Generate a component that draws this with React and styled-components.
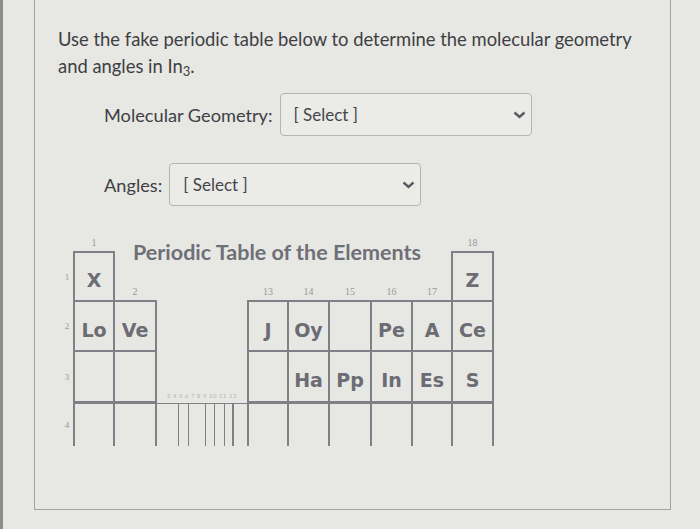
import React from "react";
import styled, { createGlobalStyle } from "styled-components";

const GlobalStyle = createGlobalStyle`
  body {
    margin: 0;
    background: #e7e7e3;
    font-family: Lato, "Open Sans", sans-serif;
  }
`;

const LINE = "#7f7f88";

const Page = styled.div`
  height: 529px;
  display: flex;
  border-left: 3px solid #8c8c8a;
  padding-left: 31px;
  box-sizing: border-box;
  overflow: hidden;
`;

const Card = styled.div`
  width: 637px;
  height: 510px;
  box-sizing: border-box;
  border: 1px solid #a3a3a3;
  border-top: none;
  padding: 26px 0 0 23px;
`;

const Question = styled.p`
  margin: 0;
  font-size: 18.4px;
  line-height: 27px;
  color: #3e3f44;
  sub {
    font-size: 13px;
    vertical-align: -3px;
    line-height: 0;
  }
`;

const Answers = styled.div`
  margin: 13px 0 0 46px;
  display: flex;
  flex-direction: column;
  gap: 27px;
`;

const AnswerRow = styled.div`
  display: flex;
  align-items: center;
  gap: 7px;
`;

const Label = styled.span`
  font-size: 18.2px;
  color: #3e3f44;
`;

const SelectBox = styled.div`
  width: 252px;
  height: 43px;
  box-sizing: border-box;
  border: 1px solid #b4b4b4;
  border-radius: 4px;
  background: #ebebe8;
  display: flex;
  align-items: center;
  justify-content: space-between;
  padding: 0 5px 0 13px;
  font-size: 17px;
  color: #45464b;
`;

const Chevron = () => (
  <svg width="13" height="8" viewBox="0 0 13 8">
    <path d="M1.5 1.5 L6.5 6 L11.5 1.5" fill="none" stroke="#5a5b60" strokeWidth="2.4" />
  </svg>
);

const Table = styled.div`
  margin: 30px 0 0 2px;
  display: grid;
  grid-template-columns: 14px 40px 42px 92px 40px 41px 42px 41px 40px 41px;
  grid-template-rows: 16px 49px 50px 52px 43px;
`;

const Cell = styled.div`
  grid-column: ${(p) => p.col};
  grid-row: ${(p) => p.row};
  box-sizing: border-box;
  border: 1px solid ${LINE};
  border-bottom-width: ${(p) => (p.thick ? "2px" : "1px")};
  box-shadow: 0 0 0 1px ${LINE};
  display: flex;
  align-items: center;
  justify-content: center;
  padding-top: 7px;
  font-family: "DejaVu Sans", Verdana, sans-serif;
  font-weight: bold;
  font-size: 19px;
  color: #6c6c74;
`;

const OpenCell = styled.div`
  grid-column: ${(p) => p.col};
  grid-row: 5;
  border: 1px solid ${LINE};
  border-bottom: none;
  box-shadow: -1px 0 0 0 ${LINE}, 1px 0 0 0 ${LINE}, 0 -1px 0 0 ${LINE};
`;

const Transition = styled.div`
  grid-column: 4;
  grid-row: 5;
  display: flex;
  border-top: 1px solid ${LINE};
`;

const Slot = styled.div`
  width: ${(p) => p.w}px;
  border-right: ${(p) => (p.last ? "none" : `1px solid ${LINE}`)};
  border-right-width: ${(p) => (p.bold ? "2px" : "1px")};
`;

const GroupNo = styled.span`
  grid-column: ${(p) => p.col};
  grid-row: ${(p) => p.row};
  align-self: end;
  justify-self: center;
  font-family: "Liberation Serif", serif;
  font-size: 10px;
  line-height: 10px;
  margin-bottom: 4px;
  color: #98989b;
`;

const PeriodNo = styled.span`
  grid-column: 1;
  grid-row: ${(p) => p.row};
  align-self: center;
  justify-self: center;
  font-family: "Liberation Serif", serif;
  font-size: 9px;
  color: #98989b;
`;

const Title = styled.div`
  grid-column: 3 / 10;
  grid-row: 1 / 3;
  align-self: start;
  justify-self: center;
  margin: 4px 12px 0 0;
  font-weight: bold;
  font-size: 21.5px;
  line-height: 24px;
  color: #6f6f77;
`;

const TinyNums = styled.span`
  grid-column: 4;
  grid-row: 4;
  align-self: end;
  justify-self: center;
  margin-bottom: 4px;
  white-space: nowrap;
  font-size: 6px;
  letter-spacing: 0.5px;
  color: #b4b4b6;
`;

const row2 = [
  [2, "Lo"], [3, "Ve"], [5, "J"], [6, "Oy"], [7, ""], [8, "Pe"], [9, "A"], [10, "Ce"],
];
const row3 = [
  [2, ""], [3, ""], [5, ""], [6, "Ha"], [7, "Pp"], [8, "In"], [9, "Es"], [10, "S"],
];
const slots = [24, 10, 17, 9, 9, 8, 15];

export default function App() {
  return (
    <>
      <GlobalStyle />
      <Page>
        <Card>
          <Question>
            Use the fake periodic table below to determine the molecular geometry
            <br />
            and angles in In<sub>3</sub>.
          </Question>
          <Answers>
            <AnswerRow>
              <Label>Molecular Geometry:</Label>
              <SelectBox>
                [ Select ]
                <Chevron />
              </SelectBox>
            </AnswerRow>
            <AnswerRow>
              <Label>Angles:</Label>
              <SelectBox>
                [ Select ]
                <Chevron />
              </SelectBox>
            </AnswerRow>
          </Answers>

          <Table>
            <GroupNo col={2} row={1}>1</GroupNo>
            <GroupNo col={10} row={1}>18</GroupNo>
            <Title>Periodic Table of the Elements</Title>
            <GroupNo col={3} row={2}>2</GroupNo>
            {[13, 14, 15, 16, 17].map((g, i) => (
              <GroupNo key={g} col={5 + i} row={2}>{g}</GroupNo>
            ))}
            {[1, 2, 3, 4].map((n) => (
              <PeriodNo key={n} row={n + 1}>{n}</PeriodNo>
            ))}

            <Cell col={2} row={2}>X</Cell>
            <Cell col={10} row={2}>Z</Cell>
            {row2.map(([c, s]) => (
              <Cell key={"a" + c} col={c} row={3}>{s}</Cell>
            ))}
            {row3.map(([c, s]) => (
              <Cell key={"b" + c} col={c} row={4} thick>{s}</Cell>
            ))}
            <TinyNums>3 4 5 6 7 8 9 10 11 12</TinyNums>

            {[2, 3, 5, 6, 7, 8, 9, 10].map((c) => (
              <OpenCell key={"c" + c} col={c} />
            ))}
            <Transition>
              {slots.map((w, i) => (
                <Slot key={i} w={w} bold={i === 5} last={i === slots.length - 1} />
              ))}
            </Transition>
          </Table>
        </Card>
      </Page>
    </>
  );
}
